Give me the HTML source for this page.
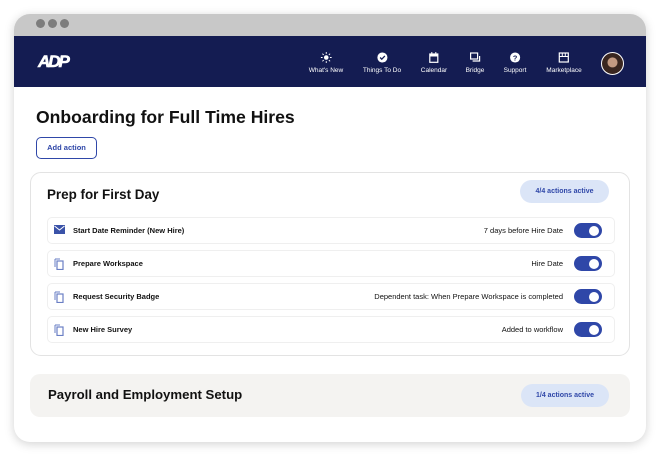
<!DOCTYPE html>
<html><head><style>
*{margin:0;padding:0;box-sizing:border-box}
body{width:660px;height:455px;background:#fff;font-family:"Liberation Sans",sans-serif;position:relative;overflow:hidden}
.win{position:absolute;left:14px;top:14px;width:632px;height:428px;border-radius:16px;background:#fff;box-shadow:0 2px 10px rgba(0,0,0,.18);overflow:hidden}
.tb{height:22px;background:#c8c8c8;position:relative}
.dot{position:absolute;top:5px;width:9px;height:9px;border-radius:50%;background:#7d7d7d}
.nav{height:51px;background:#141c52;position:relative;color:#fff}
.ni{position:absolute;top:16px;font-size:6.5px;text-align:center;transform:translateX(-50%);white-space:nowrap}
.ni svg{display:block;margin:0 auto 4px}
h1{position:absolute;left:22px;top:93px;font-size:17.6px;font-weight:bold;color:#111}
.btn{position:absolute;left:22px;top:123px;width:61px;height:22px;border:1.3px solid #2f47a8;border-radius:5px;font-size:7.5px;font-weight:bold;color:#2f47a8;text-align:center;line-height:20px}
.card{position:absolute;left:16px;top:158px;width:600px;height:184px;border:1.3px solid #e3e3e3;border-radius:11px}
.ct{position:absolute;left:16px;top:14px;font-size:13.4px;font-weight:bold;color:#111}
.badge{position:absolute;border-radius:12px;background:#dbe5f7;color:#2f47a8;font-size:7px;font-weight:bold;text-align:center;line-height:23px}
.row{position:absolute;left:16px;width:568px;height:27px;border:1px solid #efefef;border-radius:5px;font-size:7.5px;color:#111}
.row .n{position:absolute;left:25px;top:8px;font-weight:bold}
.row .r{position:absolute;right:51px;top:8px}
.tg{position:absolute;right:12px;top:5px;width:28px;height:15px;border-radius:8px;background:#2f47a8}
.tg:after{content:"";position:absolute;right:3px;top:2.5px;width:10px;height:10px;border-radius:50%;background:#fff}
.row svg{position:absolute;left:6px;top:7px}
.card2{position:absolute;left:16px;top:360px;width:600px;height:43px;background:#f4f3f1;border-radius:10px}
</style></head><body>
<div class="win">
<div class="tb"><div class="dot" style="left:22px"></div><div class="dot" style="left:34px"></div><div class="dot" style="left:46px"></div></div>
<div class="nav">
<div style="position:absolute;left:24px;top:16px;font-size:17px;font-weight:bold;font-style:italic;letter-spacing:-2px;color:#fff;-webkit-text-stroke:0.6px #fff">ADP</div>
<div class="ni" style="left:312px"><svg width="11" height="11" viewBox="0 0 12 12"><circle cx="6" cy="6" r="2.5" fill="#fff"/><g stroke="#fff" stroke-width="1"><path d="M6 0v2M6 10v2M0 6h2M10 6h2M1.8 1.8l1.4 1.4M8.8 8.8l1.4 1.4M1.8 10.2l1.4-1.4M8.8 3.2l1.4-1.4"/></g></svg>What's New</div>
<div class="ni" style="left:368px"><svg width="11" height="11" viewBox="0 0 12 12"><circle cx="6" cy="6" r="5.5" fill="#fff"/><path d="M3.5 6l1.8 1.8L8.7 4.3" stroke="#141c52" stroke-width="1.4" fill="none"/></svg>Things To Do</div>
<div class="ni" style="left:420px"><svg width="10" height="11" viewBox="0 0 10 11"><rect x="1" y="2" width="8" height="8.3" fill="none" stroke="#fff" stroke-width="1.2"/><rect x="1" y="2" width="8" height="2.5" fill="#fff"/><path d="M3 0v2M7 0v2" stroke="#fff"/></svg>Calendar</div>
<div class="ni" style="left:461px"><svg width="11" height="11" viewBox="0 0 11 11"><rect x="1" y="1" width="7" height="6" fill="none" stroke="#fff" stroke-width="1.2"/><path d="M3 9h7V4" stroke="#fff" stroke-width="1.2" fill="none"/></svg>Bridge</div>
<div class="ni" style="left:501px"><svg width="11" height="11" viewBox="0 0 12 12"><circle cx="6" cy="6" r="5.5" fill="#fff"/><text x="6" y="9" font-size="8" font-weight="bold" text-anchor="middle" fill="#141c52" font-family="Liberation Sans">?</text></svg>Support</div>
<div class="ni" style="left:550px"><svg width="11" height="11" viewBox="0 0 11 11"><rect x="1" y="1" width="9" height="9" fill="none" stroke="#fff" stroke-width="1.2"/><path d="M1 4.5h9M4 1v3.5M7 1v3.5" stroke="#fff"/></svg>Marketplace</div>
<div style="position:absolute;left:587px;top:16px;width:23px;height:23px;border-radius:50%;background:radial-gradient(circle at 50% 45%,#c49a82 0 30%,#3a2620 34%);border:1px solid #fff"></div>
</div>
<h1>Onboarding for Full Time Hires</h1>
<div class="btn">Add action</div>
<div class="card">
<div class="ct">Prep for First Day</div>
<div class="badge" style="left:489px;top:7px;width:89px;height:23px">4/4 actions active</div>
<div class="row" style="top:44px"><svg width="11" height="10" viewBox="0 0 11 10"><rect width="11" height="9" fill="#3a52a8"/><path d="M0.5 1l5 4 5-4" stroke="#fff" fill="none"/></svg><span class="n">Start Date Reminder (New Hire)</span><span class="r">7 days before Hire Date</span><div class="tg"></div></div>
<div class="row" style="top:77px"><svg width="10" height="12" viewBox="0 0 10 12"><path d="M1 1h5M1 1v8" stroke="#6a7fc4" fill="none"/><rect x="3" y="3" width="6" height="8.5" fill="none" stroke="#6a7fc4" stroke-width="1.2"/></svg><span class="n">Prepare Workspace</span><span class="r">Hire Date</span><div class="tg"></div></div>
<div class="row" style="top:110px"><svg width="10" height="12" viewBox="0 0 10 12"><path d="M1 1h5M1 1v8" stroke="#6a7fc4" fill="none"/><rect x="3" y="3" width="6" height="8.5" fill="none" stroke="#6a7fc4" stroke-width="1.2"/></svg><span class="n">Request Security Badge</span><span class="r">Dependent task: When Prepare Workspace is completed</span><div class="tg"></div></div>
<div class="row" style="top:143px"><svg width="10" height="12" viewBox="0 0 10 12"><path d="M1 1h5M1 1v8" stroke="#6a7fc4" fill="none"/><rect x="3" y="3" width="6" height="8.5" fill="none" stroke="#6a7fc4" stroke-width="1.2"/></svg><span class="n">New Hire Survey</span><span class="r">Added to workflow</span><div class="tg"></div></div>
</div>
<div class="card2">
<div class="ct" style="left:18px;top:13px;font-size:13.2px">Payroll and Employment Setup</div>
<div class="badge" style="left:491px;top:10px;width:88px;height:23px">1/4 actions active</div>
</div>
</div>
</body></html>
